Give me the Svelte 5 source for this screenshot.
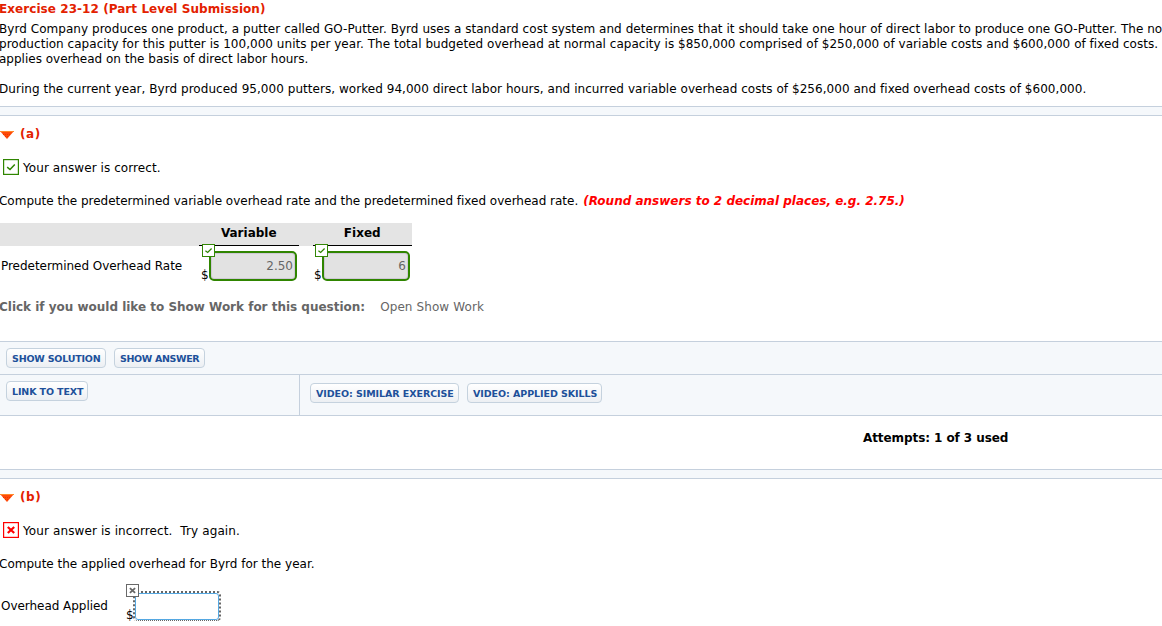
<script lang="ts">
	const intro = [
		'Byrd Company produces one product, a putter called GO-Putter. Byrd uses a standard cost system and determines that it should take one hour of direct labor to produce one GO-Putter. The no',
		'production capacity for this putter is 100,000 units per year. The total budgeted overhead at normal capacity is $850,000 comprised of $250,000 of variable costs and $600,000 of fixed costs.',
		'applies overhead on the basis of direct labor hours.'
	];
	const rates = [
		{ name: 'Variable', value: '2.50' },
		{ name: 'Fixed', value: '6' }
	];
	let applied = '';
</script>

{#snippet arrow()}
	<svg class="arrow" width="14" height="8" viewBox="0 0 14 8">
		<path d="M0 0h14L7 8z" fill="#ff4a0a" />
		<path d="M0 .5h14" stroke="#ff8a2a" />
		<path d="M3 3.5h8M5 5.5h4" stroke="#e83a00" stroke-dasharray="1 1" />
	</svg>
{/snippet}

{#snippet tick(size)}
	<svg class="mark" width={size} height={size} viewBox="0 0 16 16">
		<rect x=".6" y=".6" width="14.8" height="14.8" fill="#fff" stroke="#2f8500" stroke-width="1.2" />
		<path d="M4.2 8.2l2.8 2.3 4.8-5" fill="none" stroke="#2f8500" stroke-width="1.5" />
	</svg>
{/snippet}

{#snippet cross(size, color)}
	<svg class="mark" width={size} height={size} viewBox="0 0 16 16">
		<rect x=".6" y=".6" width="14.8" height="14.8" fill="#fff" stroke={color} stroke-width="1.2" />
		<path d="M4.8 5l6.4 6M11.2 5l-6.4 6" stroke={color} stroke-width="2.2" />
	</svg>
{/snippet}

<main>
	<h1>Exercise 23-12 (Part Level Submission)</h1>
	<div class="intro">
		{#each intro as line, i}
			<p class:first={i == 0} class:middle={i == 1}>{line}</p>
		{/each}
		<p class="second">During the current year, Byrd produced 95,000 putters, worked 94,000 direct labor hours, and incurred variable overhead costs of $256,000 and fixed overhead costs of $600,000.</p>
	</div>
	<div class="band"></div>

	<section>
		<h2>{@render arrow()}<span>(a)</span></h2>
		<div class="status">{@render tick(16)}<span class="correct">Your answer is correct.</span></div>
		<p class="task">
			<span class="compute">Compute the predetermined variable overhead rate and the predetermined fixed overhead rate.</span>
			<em>(Round answers to 2 decimal places, e.g. 2.75.)</em>
		</p>
		<div class="head">
			{#each rates as rate}
				<div class="th">{rate.name}</div>
			{/each}
		</div>
		<div class="rates">
			<span class="label">Predetermined Overhead Rate</span>
			{#each rates as rate}
				<div class="cell">
					<span class="dollar">$</span>
					<input class="done" value={rate.value} aria-label={rate.name} disabled />
					<span class="badge">{@render tick(13)}</span>
				</div>
			{/each}
		</div>
		<p class="work">
			<b>Click if you would like to Show Work for this question:</b>
			<span class="open">Open Show Work</span>
		</p>
	</section>

	<div class="bar solution">
		<button class="b1">SHOW SOLUTION</button>
		<button class="b2">SHOW ANSWER</button>
	</div>
	<div class="bar links">
		<div class="left"><button class="b3">LINK TO TEXT</button></div>
		<div class="right">
			<button class="b4">VIDEO: SIMILAR EXERCISE</button>
			<button class="b5">VIDEO: APPLIED SKILLS</button>
		</div>
	</div>
	<div class="attempts">Attempts: 1 of 3 used</div>
	<div class="band"></div>

	<section>
		<h2>{@render arrow()}<span>(b)</span></h2>
		<div class="status">
			{@render cross(16, '#f00')}<span class="incorrect">Your answer is incorrect.&nbsp; Try again.</span>
		</div>
		<p class="task">Compute the applied overhead for Byrd for the year.</p>
		<div class="rates applied">
			<span class="label">Overhead Applied</span>
			<div class="cell">
				<span class="dollar">$</span>
				<div class="dotted"><input bind:value={applied} aria-label="Overhead Applied" /></div>
				<span class="badge">{@render cross(13, '#666')}</span>
			</div>
		</div>
	</section>
</main>

<style>
	:global(body) {
		background: #fff;
		overflow: hidden;
	}
	main {
		height: 626px;
		overflow: hidden;
		font-family: Verdana, 'DejaVu Sans', sans-serif;
		font-size: 12px;
		line-height: 15px;
		color: #000;
		white-space: nowrap;
	}
	h1,
	h2,
	p {
		margin: 0;
		font-size: 12px;
	}
	h1,
	h2 {
		color: #e32100;
	}
	h1 {
		padding: 2px 0 5px;
		margin-left: -1px;
		letter-spacing: 0.06px;
	}
	.intro {
		height: 84px;
		margin-left: -1px;
	}
	.first {
		letter-spacing: 0.045px;
	}
	.middle {
		letter-spacing: 0.032px;
	}
	.second {
		margin-top: 15px;
		letter-spacing: 0.044px;
	}
	.band {
		height: 8px;
		border: solid #c5d0dd;
		border-width: 1px 0;
		background: #f5f8fb;
	}
	h2 {
		display: flex;
		align-items: center;
		gap: 6px;
		height: 15px;
		padding-top: 11px;
		letter-spacing: 0.6px;
	}
	.arrow {
		margin-top: 1px;
	}
	.mark {
		display: block;
		flex: none;
	}
	.status {
		display: flex;
		align-items: center;
		gap: 4px;
		height: 16px;
		margin: 17px 0 0 3px;
	}
	.status span {
		padding-top: 2px;
	}
	.correct {
		letter-spacing: 0.08px;
	}
	.incorrect {
		letter-spacing: 0.11px;
	}
	.task {
		display: flex;
		gap: 5px;
		margin: 19px 0 0 -1px;
	}
	.compute {
		letter-spacing: -0.01px;
	}
	em {
		color: #f00;
		font-weight: bold;
	}
	.head {
		display: flex;
		gap: 14px;
		width: 213px;
		height: 23px;
		margin-top: 14px;
		padding-left: 199px;
		background: #e4e4e4;
	}
	.th {
		box-sizing: border-box;
		flex: 1;
		padding-top: 3px;
		border-bottom: 1px solid #000;
		font-weight: bold;
		text-align: center;
	}
	.rates {
		display: flex;
		height: 30px;
		margin-top: 5px;
	}
	.label {
		width: 200px;
		padding: 8px 0 0 1px;
		box-sizing: border-box;
		letter-spacing: -0.04px;
	}
	.cell {
		position: relative;
		display: flex;
		width: 113px;
	}
	.dollar {
		width: 9px;
		padding: 17px 0 0 1px;
		box-sizing: border-box;
	}
	.badge {
		position: absolute;
		left: 2px;
		top: -7px;
	}
	input {
		box-sizing: border-box;
		width: 88px;
		height: 30px;
		margin: 0;
		padding: 0 2px 0 0;
		font: inherit;
		text-align: right;
	}
	.done {
		border: 2px solid #2f8500;
		border-radius: 5px;
		background: #e2e2e2;
		box-shadow: inset 0 0 0 1px #cfc9d6;
		color: #666;
	}
	.work {
		display: flex;
		gap: 15px;
		margin: 19px 0 0 -1px;
		height: 41px;
		color: #666;
	}
	.work b {
		letter-spacing: -0.01px;
	}
	.open {
		letter-spacing: 0.1px;
	}
	.bar {
		box-sizing: border-box;
		display: flex;
		border-top: 1px solid #c5d0dd;
		background: #f5f8fb;
	}
	.solution {
		gap: 8px;
		height: 33px;
		padding: 6px;
	}
	.links {
		height: 42px;
		border-bottom: 1px solid #c5d0dd;
	}
	.left {
		width: 293px;
		padding: 6px 0 0 6px;
		border-right: 1px solid #c5d0dd;
	}
	.right {
		display: flex;
		gap: 8px;
		padding: 8px 10px;
	}
	button {
		box-sizing: border-box;
		height: 20px;
		padding: 0 0 0 5px;
		border: 1px solid #c5d2de;
		border-radius: 4px;
		background: linear-gradient(#fff, #eceff3);
		color: #20509a;
		font: bold 9.5px/17px Verdana, 'DejaVu Sans', sans-serif;
		text-align: left;
		white-space: nowrap;
	}
	.b1 {
		width: 100px;
		letter-spacing: -0.2px;
	}
	.b2 {
		width: 91px;
		letter-spacing: -0.35px;
	}
	.b3 {
		width: 82px;
		letter-spacing: -0.13px;
	}
	.b4 {
		width: 149px;
		letter-spacing: -0.07px;
	}
	.b5 {
		width: 135px;
		letter-spacing: -0.07px;
	}
	.attempts {
		height: 38px;
		padding: 15px 0 0 863px;
		font-weight: bold;
		letter-spacing: -0.08px;
	}
	.applied {
		margin-top: 19px;
	}
	.applied .label {
		width: 125px;
	}
	.applied .badge {
		left: 1px;
	}
	.dotted {
		box-sizing: border-box;
		width: 88px;
		height: 30px;
		margin-left: -1px;
		border: 2px dotted #666;
		border-bottom-width: 1px;
		border-radius: 4px;
	}
	.dotted input {
		display: block;
		width: 84px;
		height: 27px;
		border: 1px solid #55a8e2;
		border-radius: 3px;
		background: #fff;
	}
</style>
